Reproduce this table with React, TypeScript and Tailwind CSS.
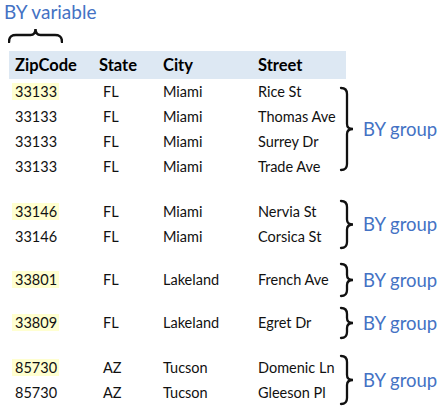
import React from 'react'

type Row = { zip: string; state: string; city: string; street: string }

const groups: { rows: Row[]; brace: number; gap: string }[] = [
  {
    gap: 'mt-0',
    brace: 84,
    rows: [
      { zip: '33133', state: 'FL', city: 'Miami', street: 'Rice St' },
      { zip: '33133', state: 'FL', city: 'Miami', street: 'Thomas Ave' },
      { zip: '33133', state: 'FL', city: 'Miami', street: 'Surrey Dr' },
      { zip: '33133', state: 'FL', city: 'Miami', street: 'Trade Ave' },
    ],
  },
  {
    gap: 'mt-[20px]',
    brace: 49,
    rows: [
      { zip: '33146', state: 'FL', city: 'Miami', street: 'Nervia St' },
      { zip: '33146', state: 'FL', city: 'Miami', street: 'Corsica St' },
    ],
  },
  {
    gap: 'mt-[18px]',
    brace: 34,
    rows: [{ zip: '33801', state: 'FL', city: 'Lakeland', street: 'French Ave' }],
  },
  {
    gap: 'mt-[18px]',
    brace: 32,
    rows: [{ zip: '33809', state: 'FL', city: 'Lakeland', street: 'Egret Dr' }],
  },
  {
    gap: 'mt-[20px]',
    brace: 50,
    rows: [
      { zip: '85730', state: 'AZ', city: 'Tucson', street: 'Domenic Ln' },
      { zip: '85730', state: 'AZ', city: 'Tucson', street: 'Gleeson Pl' },
    ],
  },
]

const RightBrace = ({ h }: { h: number }) => {
  const m = h / 2
  const d = `M1,1 C5,1 7,2.5 7,7 L7,${m - 5} C7,${m - 1.5} 9,${m} 13,${m} C9,${m} 7,${m + 1.5} 7,${m + 5} L7,${h - 7} C7,${h - 2.5} 5,${h - 1} 1,${h - 1}`
  return (
    <svg width="14" height={h} viewBox={`0 0 14 ${h}`} className="block overflow-visible">
      <path d={d} fill="none" stroke="#111" strokeWidth="2.3" strokeLinecap="round" />
    </svg>
  )
}

const OverBrace = () => {
  const w = 55
  const c = w / 2
  const d = `M1,14 C1,9 3,7 8,7 L${c - 5},7 C${c - 1.5},7 ${c},5 ${c},1 C${c},5 ${c + 1.5},7 ${c + 5},7 L${w - 8},7 C${w - 3},7 ${w - 1},9 ${w - 1},14`
  return (
    <svg width={w} height="15" viewBox={`0 0 ${w} 15`} className="block">
      <path d={d} fill="none" stroke="#111" strokeWidth="2.5" strokeLinecap="round" />
    </svg>
  )
}

export default function App() {
  return (
    <div className="w-[446px] h-[408px] overflow-hidden bg-white font-['Lato',sans-serif] text-black">
      <div className="pl-[4px] pt-[1px] h-[27px] text-[19px] leading-[22px] text-[#4472c4]">BY variable</div>
      <div className="pl-[8px] h-[24px] pt-[1px]">
        <OverBrace />
      </div>

      <div className="ml-[9px] w-[337px] h-[28px] bg-[#dde8f3] flex items-center text-[16.5px] font-bold">
        <div className="w-[90px] pl-[6px]">ZipCode</div>
        <div className="w-[64px]">State</div>
        <div className="w-[95px]">City</div>
        <div>Street</div>
      </div>

      {groups.map((g, gi) => (
        <div key={gi} className={`flex items-center ${g.gap}`}>
          <div className="ml-[9px] w-[331px] text-[14.5px] text-[#111]">
            {g.rows.map((r, ri) => (
              <div key={ri} className="h-[25px] flex items-center">
                <div className="w-[90px] pl-[3px]">
                  <span
                    className={`inline-block w-[47px] h-[17px] leading-[17px] pl-[3px] ${ri === 0 ? 'bg-[#ffffd0]' : ''}`}
                  >
                    {r.zip}
                  </span>
                </div>
                <div className="w-[64px] pl-[4px]">{r.state}</div>
                <div className="w-[95px]">{r.city}</div>
                <div>{r.street}</div>
              </div>
            ))}
          </div>
          <div className="h-0 flex items-center">
            <RightBrace h={g.brace} />
          </div>
          <div className="ml-[9px] text-[18.5px] leading-[22px] text-[#4472c4]">BY group</div>
        </div>
      ))}
    </div>
  )
}
